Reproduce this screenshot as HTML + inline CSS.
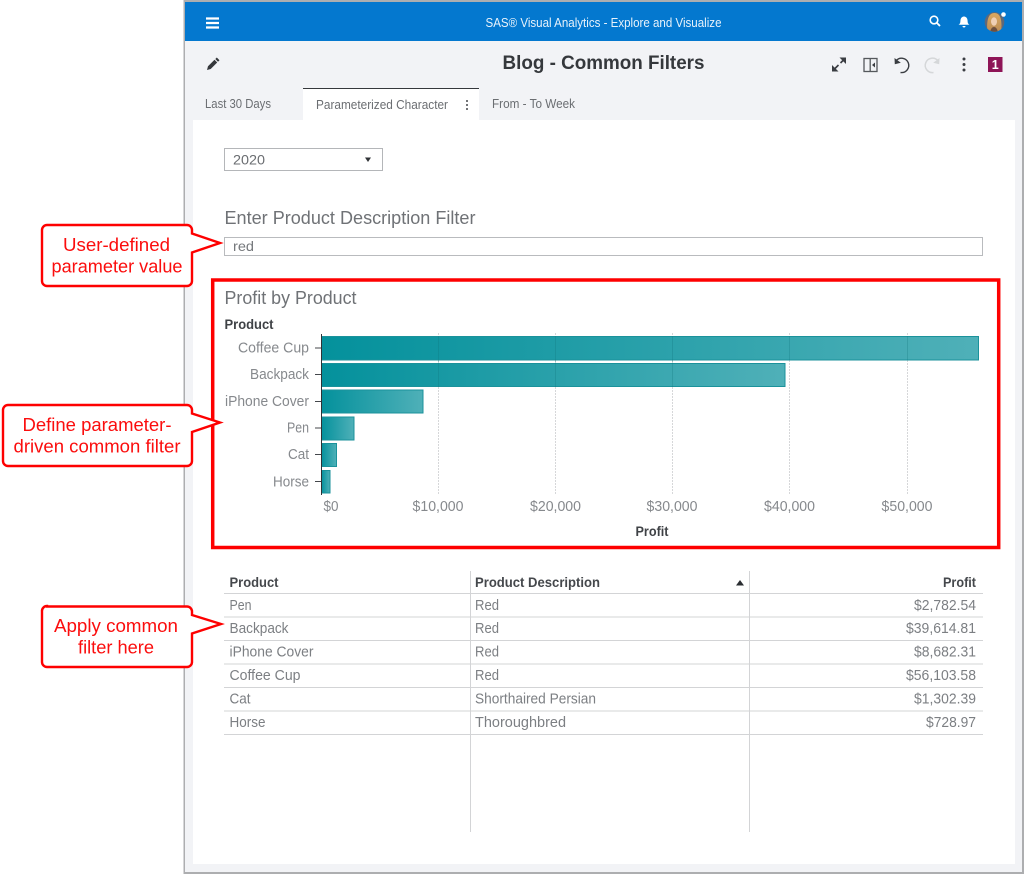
<!DOCTYPE html>
<html>
<head>
<meta charset="utf-8">
<title>Blog - Common Filters</title>
<style>
html,body{margin:0;padding:0;background:#fff;width:1024px;height:874px;overflow:hidden}
svg{display:block;position:absolute;left:0;top:0;filter:blur(.35px)}
text{font-family:"Liberation Sans",sans-serif}
.g{fill:#86898d;font-size:14.5px}
.t{fill:#7c7f83;font-size:14.5px}
.h{fill:#45484c;font-size:14px;font-weight:bold}
.a{fill:#fb0d0d;font-size:18px;text-anchor:middle}
.s{stroke:#3a3d42;fill:none;stroke-width:1.4}
</style>
</head>
<body>
<svg width="1024" height="874" viewBox="0 0 1024 874" xmlns="http://www.w3.org/2000/svg">
<defs>
<linearGradient id="b1" x1="0" x2="1" y1="0" y2="0"><stop offset="0" stop-color="#04919c"/><stop offset="1" stop-color="#4fb0b8"/></linearGradient>
<linearGradient id="hair" x1="0" x2="0" y1="0" y2="1"><stop offset="0" stop-color="#d9a860"/><stop offset="1" stop-color="#b98a55"/></linearGradient>
<clipPath id="avc"><circle cx="994.500" cy="22" r="9.800"/></clipPath>
</defs>

<!-- frame -->
<rect x="183.500" y="0" width="840.500" height="874" fill="#adaeb0"/>
<rect x="185" y="2" width="837" height="870" fill="#f2f3f6"/>
<rect x="185" y="2" width="837" height="39" fill="#0478cf"/>
<rect x="193" y="120" width="822" height="744" fill="#fff"/>

<!-- app bar -->
<path d="M206 18.500h13M206 23h13M206 27.500h13" stroke="#fff" stroke-width="2.200" fill="none"/>
<text x="603.500" y="27" text-anchor="middle" fill="#e8f2fb" font-size="12.500" textLength="236" lengthAdjust="spacingAndGlyphs">SAS® Visual Analytics - Explore and Visualize</text>
<circle cx="934" cy="20" r="3.800" fill="none" stroke="#fff" stroke-width="1.600"/>
<path d="M936.700 22.700l3.300 3.300" stroke="#fff" stroke-width="1.800"/>
<path d="M959.500 24.500c1.500-1 1-2.500 1.300-4.500.3-2 1.700-3.200 3.200-3.200s2.900 1.200 3.200 3.200c.3 2-.2 3.500 1.300 4.500z" fill="#fff" stroke="#fff" stroke-width=".6"/>
<path d="M962.500 26h3a1.500 1.500 0 0 1-3 0z" fill="#fff"/>
<g clip-path="url(#avc)">
<rect x="984" y="12" width="21" height="21" fill="#5f6878"/>
<path d="M987.500 33c-1-9-.5-20 7-20s7.500 11 6.500 20z" fill="url(#hair)"/>
<ellipse cx="994" cy="21.500" rx="3" ry="4.300" fill="#efcfb4"/>
<path d="M990 33c.5-4 2-6 4-6s3.500 2 4 6z" fill="#6e4f3e"/>
</g>
<circle cx="1003.500" cy="14.500" r="2.300" fill="#fff"/>

<!-- toolbar -->
<path d="M207 70l1-3.700 6.500-6.500 2.700 2.700-6.500 6.500z" fill="#34373b"/>
<path d="M215.300 59l1.500-1.500 2.700 2.700-1.500 1.500z" fill="#34373b"/>
<text x="603.500" y="69" text-anchor="middle" fill="#35383c" font-size="19.500" font-weight="bold" textLength="202" lengthAdjust="spacingAndGlyphs">Blog - Common Filters</text>

<path d="M835 68.500l3.500-3.500M840.500 63l3.500-3.500" stroke="#3a3d42" stroke-width="1.600"/>
<path d="M832 65v6.500h6.500zM846 57.500h-6.500l6.500 6.500z" fill="#3a3d42"/>
<rect x="864" y="58.500" width="13" height="13" fill="none" stroke="#55585c" stroke-width="1.300"/>
<path d="M870.200 58v14" fill="none" stroke="#55585c" stroke-width="1.300"/>
<path d="M875 62.500l-3 2.500 3 2.500z" fill="#3a3d42"/>
<path d="M896 60.800a7.200 7.200 0 1 1 4.500 11.700" class="s" stroke-width="1.500"/>
<path d="M894.500 58l.3 6.300 6-1.500z" fill="#3a3d42"/>
<path d="M938 60.800a7.200 7.200 0 1 0-4.500 11.700" fill="none" stroke="#d5d7d9" stroke-width="1.500"/>
<path d="M939.500 58l-.3 6.300-6-1.500z" fill="#d5d7d9"/>
<circle cx="964" cy="59" r="1.500" fill="#3a3d42"/><circle cx="964" cy="64.500" r="1.500" fill="#3a3d42"/><circle cx="964" cy="70" r="1.500" fill="#3a3d42"/>
<rect x="988" y="57" width="14.500" height="15" fill="#8e1457"/>
<text x="995.200" y="69" text-anchor="middle" fill="#fff" font-size="12.500" font-weight="bold">1</text>

<!-- tabs -->
<rect x="303" y="88" width="176" height="32" fill="#fff"/>
<rect x="303" y="88" width="176" height="1" fill="#35383c"/>
<text x="205" y="108" fill="#6b6e72" font-size="12.500" textLength="66" lengthAdjust="spacingAndGlyphs">Last 30 Days</text>
<text x="316" y="109" fill="#6b6e72" font-size="12.500" textLength="132" lengthAdjust="spacingAndGlyphs">Parameterized Character</text>
<circle cx="467" cy="101" r="1" fill="#45484c"/><circle cx="467" cy="105" r="1" fill="#45484c"/><circle cx="467" cy="109" r="1" fill="#45484c"/>
<text x="492" y="108" fill="#6b6e72" font-size="12.500" textLength="83" lengthAdjust="spacingAndGlyphs">From - To Week</text>

<!-- year dropdown -->
<rect x="224.500" y="148.500" width="158" height="22" fill="#fff" stroke="#b4b6b9"/>
<text x="233" y="164.500" fill="#6a6d71" font-size="14" textLength="32" lengthAdjust="spacingAndGlyphs">2020</text>
<path d="M365 157.500h6l-3 4.500z" fill="#2f3236"/>

<!-- text input -->
<text x="224.500" y="224" fill="#6f7276" font-size="18" textLength="251" lengthAdjust="spacingAndGlyphs">Enter Product Description Filter</text>
<rect x="224.500" y="237.500" width="758" height="18" fill="#fff" stroke="#b9bbbe"/>
<text x="233" y="251" fill="#75787c" font-size="14" textLength="21" lengthAdjust="spacingAndGlyphs">red</text>

<!-- chart -->
<text x="224.500" y="304" fill="#6f7276" font-size="18" textLength="132" lengthAdjust="spacingAndGlyphs">Profit by Product</text>
<text x="224.500" y="329" fill="#3f4246" font-size="13.500" font-weight="bold" textLength="49" lengthAdjust="spacingAndGlyphs">Product</text>

<g stroke="#d6d7d9" stroke-width="1" stroke-dasharray="2 1">
<path d="M438.500 333v162M555.500 333v162M672.500 333v162M789.500 333v162M907.500 333v162"/>
</g>
<g stroke="#1b929b" stroke-width="1" fill="url(#b1)">
<rect x="321.500" y="336.500" width="657" height="23.500"/>
<rect x="321.500" y="363.500" width="463.500" height="23"/>
<rect x="321.500" y="390" width="101.500" height="23"/>
<rect x="321.500" y="417" width="32.500" height="23"/>
<rect x="321.500" y="443.500" width="15" height="23"/>
<rect x="321.500" y="470.500" width="8.500" height="22.500"/>
</g>
<g stroke="#0c6f78" stroke-opacity=".25" stroke-width="1"><path d="M438.500 336v51M555.500 336v51M672.500 336v51M789.500 336v24M907.500 336v24"/></g>
<path d="M321.500 334v161" stroke="#2f3236" stroke-width="1"/>
<path d="M315 348h6M315 374.500h6M315 401.500h6M315 428h6M315 454.500h6M315 481.500h6" stroke="#44474b" stroke-width="1"/>

<g class="g" text-anchor="end">
<text x="309" y="352.500" textLength="71" lengthAdjust="spacingAndGlyphs">Coffee Cup</text>
<text x="309" y="379" textLength="59" lengthAdjust="spacingAndGlyphs">Backpack</text>
<text x="309" y="406" textLength="84" lengthAdjust="spacingAndGlyphs">iPhone Cover</text>
<text x="309" y="432.500" textLength="22" lengthAdjust="spacingAndGlyphs">Pen</text>
<text x="309" y="459" textLength="21" lengthAdjust="spacingAndGlyphs">Cat</text>
<text x="309" y="486.500" textLength="36" lengthAdjust="spacingAndGlyphs">Horse</text>
</g>
<g class="g" text-anchor="middle">
<text x="331" y="511" textLength="15" lengthAdjust="spacingAndGlyphs">$0</text>
<text x="438" y="511" textLength="51" lengthAdjust="spacingAndGlyphs">$10,000</text>
<text x="555.500" y="511" textLength="51" lengthAdjust="spacingAndGlyphs">$20,000</text>
<text x="672" y="511" textLength="51" lengthAdjust="spacingAndGlyphs">$30,000</text>
<text x="789.500" y="511" textLength="51" lengthAdjust="spacingAndGlyphs">$40,000</text>
<text x="907" y="511" textLength="51" lengthAdjust="spacingAndGlyphs">$50,000</text>
</g>
<text x="652" y="536" text-anchor="middle" fill="#3f4246" font-size="13.500" font-weight="bold" textLength="33" lengthAdjust="spacingAndGlyphs">Profit</text>

<!-- table -->
<g stroke="#d3d4d6" stroke-width="1">
<path d="M470.500 571v261M749.500 571v261"/>
<path d="M224 593.500h759M224 617h759M224 640.500h759M224 664h759M224 687.500h759M224 711h759M224 734.500h759"/>
</g>
<text class="h" x="229.500" y="587" textLength="49" lengthAdjust="spacingAndGlyphs">Product</text>
<text class="h" x="475" y="587" textLength="125" lengthAdjust="spacingAndGlyphs">Product Description</text>
<path d="M736 585.500l4-5.500 4 5.500z" fill="#2a2d31"/>
<text class="h" x="976" y="587" text-anchor="end" textLength="33" lengthAdjust="spacingAndGlyphs">Profit</text>
<g class="t">
<text x="229.500" y="610" textLength="22" lengthAdjust="spacingAndGlyphs">Pen</text>
<text x="229.500" y="633" textLength="59" lengthAdjust="spacingAndGlyphs">Backpack</text>
<text x="229.500" y="656.500" textLength="84" lengthAdjust="spacingAndGlyphs">iPhone Cover</text>
<text x="229.500" y="680" textLength="71" lengthAdjust="spacingAndGlyphs">Coffee Cup</text>
<text x="229.500" y="703.500" textLength="21" lengthAdjust="spacingAndGlyphs">Cat</text>
<text x="229.500" y="727" textLength="36" lengthAdjust="spacingAndGlyphs">Horse</text>
<text x="475" y="610" textLength="24" lengthAdjust="spacingAndGlyphs">Red</text>
<text x="475" y="633" textLength="24" lengthAdjust="spacingAndGlyphs">Red</text>
<text x="475" y="656.500" textLength="24" lengthAdjust="spacingAndGlyphs">Red</text>
<text x="475" y="680" textLength="24" lengthAdjust="spacingAndGlyphs">Red</text>
<text x="475" y="703.500" textLength="121" lengthAdjust="spacingAndGlyphs">Shorthaired Persian</text>
<text x="475" y="727" textLength="91" lengthAdjust="spacingAndGlyphs">Thoroughbred</text>
</g>
<g class="t" text-anchor="end">
<text x="976" y="610" textLength="62" lengthAdjust="spacingAndGlyphs">$2,782.54</text>
<text x="976" y="633" textLength="70" lengthAdjust="spacingAndGlyphs">$39,614.81</text>
<text x="976" y="656.500" textLength="62" lengthAdjust="spacingAndGlyphs">$8,682.31</text>
<text x="976" y="680" textLength="70" lengthAdjust="spacingAndGlyphs">$56,103.58</text>
<text x="976" y="703.500" textLength="62" lengthAdjust="spacingAndGlyphs">$1,302.39</text>
<text x="976" y="727" textLength="50" lengthAdjust="spacingAndGlyphs">$728.97</text>
</g>

<!-- red highlight -->
<rect x="212.700" y="280" width="786" height="267.500" fill="none" stroke="#fe0000" stroke-width="3.500"/>

<!-- callouts -->
<g fill="#fff" stroke="#fe0000" stroke-width="2.400">
<path d="M47 225h140a5 5 0 0 1 5 5v3.500l28 9.500-28 9.500V281a5 5 0 0 1-5 5H47a5 5 0 0 1-5-5v-51a5 5 0 0 1 5-5z"/>
<path d="M8 405h179a5 5 0 0 1 5 5v3.500l28 9-28 9.500V461a5 5 0 0 1-5 5H8a5 5 0 0 1-5-5v-51a5 5 0 0 1 5-5z"/>
<path d="M47 606.500h140a5 5 0 0 1 5 5v3.500l29 9-29 9.500V662a5 5 0 0 1-5 5H47a5 5 0 0 1-5-5v-50.500a5 5 0 0 1 5-5.500z"/>
</g>
<text class="a" x="116.500" y="251" textLength="107" lengthAdjust="spacingAndGlyphs">User-defined</text>
<text class="a" x="117" y="272.500" textLength="131" lengthAdjust="spacingAndGlyphs">parameter value</text>
<text class="a" x="97" y="431" textLength="149" lengthAdjust="spacingAndGlyphs">Define parameter-</text>
<text class="a" x="97" y="452.500" textLength="167" lengthAdjust="spacingAndGlyphs">driven common filter</text>
<text class="a" x="116" y="632" textLength="124" lengthAdjust="spacingAndGlyphs">Apply common</text>
<text class="a" x="116" y="653.500" textLength="76" lengthAdjust="spacingAndGlyphs">filter here</text>
</svg>
</body>
</html>
